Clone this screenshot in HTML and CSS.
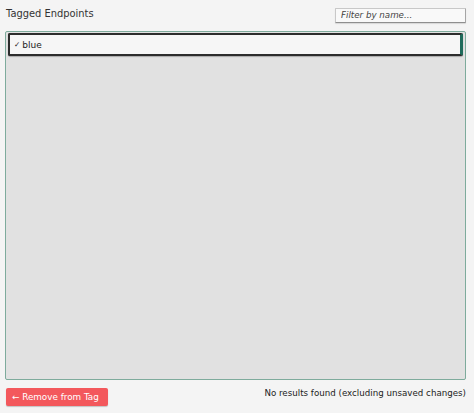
FILE: index.html
```html
<!DOCTYPE html>
<html>
<head>
<meta charset="utf-8">
<link rel="stylesheet" href="styles.css">
</head>
<body>
<div class="app">
  <div class="header">
    <div class="title">Tagged Endpoints</div>
    <input class="filter" type="text" placeholder="Filter by name...">
  </div>
  <div class="panel">
    <div class="row"><span class="check">✓</span> blue</div>
  </div>
  <div class="footer">
    <button class="remove">← Remove from Tag</button>
    <div class="status">No results found (excluding unsaved changes)</div>
  </div>
</div>
</body>
</html>
```
FILE: styles.css
```css
html, body {
  margin: 0;
  padding: 0;
  background: #f4f4f4;
  font-family: "DejaVu Sans", sans-serif;
  color: #333;
}
.app {
  width: 474px;
  height: 413px;
  box-sizing: border-box;
  padding: 0 8px 0 5px;
}
.header {
  display: flex;
  justify-content: space-between;
  align-items: center;
  height: 29px;
  padding-left: 1px;
}
.title {
  font-size: 9.9px;
  color: #333;
  margin-top: -3px;
}
.filter {
  width: 131px;
  height: 15px;
  box-sizing: border-box;
  margin: 0;
  margin-top: 1px;
  border: 1px solid #c8c8c8;
  border-bottom-color: #8f8f8f;
  border-right-color: #a5a5a5;
  border-radius: 1px;
  background: #f9f9f9;
  box-shadow: 0 1px 1px rgba(0,0,0,0.12);
  font-family: "DejaVu Sans", sans-serif;
  font-size: 8.7px;
  font-style: italic;
  padding: 0 5px;
  color: #333;
}
.filter::placeholder {
  color: #444;
  font-style: italic;
}
.panel {
  height: 349px;
  box-sizing: border-box;
  margin-top: 2px;
  border: 1px solid #7eab9c;
  border-radius: 2px;
  background: #e1e1e1;
  padding: 1px 2px;
}
.row {
  height: 23px;
  box-sizing: border-box;
  background: #f6f6f6;
  border: 2px solid #2c2c2c;
  border-right: 3px solid #1f6b5b;
  border-radius: 2px;
  box-shadow: 0 1px 1px rgba(0,0,0,0.25);
  display: flex;
  align-items: center;
  padding-left: 4px;
  font-size: 9px;
  color: #222;
}
.check {
  font-size: 7.5px;
  margin-right: 2px;
}
.footer {
  display: flex;
  justify-content: space-between;
  align-items: center;
  margin-top: 8px;
  padding-left: 1px;
}
.remove {
  width: 102px;
  height: 18px;
  box-sizing: border-box;
  margin: 0;
  border: none;
  border-radius: 2px;
  background: #f3585c;
  box-shadow: 0 1px 1px rgba(0,0,0,0.2);
  color: #fff;
  font-family: "DejaVu Sans", sans-serif;
  font-size: 8.8px;
  white-space: nowrap;
  text-align: left;
  padding: 0 6px;
}
.status {
  font-size: 8.7px;
  color: #222;
  margin-top: -9px;
}
```
